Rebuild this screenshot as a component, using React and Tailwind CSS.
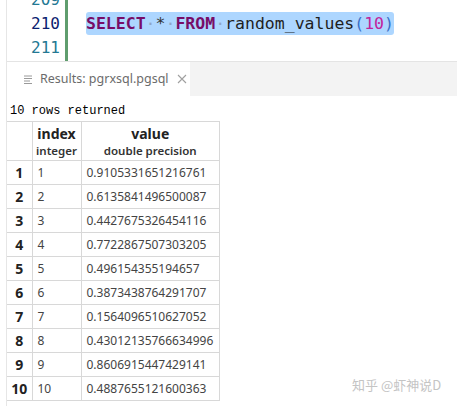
import React from 'react';

const rows = [
  '0.9105331651216761',
  '0.6135841496500087',
  '0.4427675326454116',
  '0.7722867507303205',
  '0.496154355194657',
  '0.3873438764291707',
  '0.1564096510627052',
  '0.43012135766634996',
  '0.8606915447429141',
  '0.4887655121600363',
];

const mono = { fontFamily: '"DejaVu Sans Mono", monospace' };

function Dot() {
  return <span className="text-[#8fa6c8]">·</span>;
}

export default function App() {
  return (
    <div
      className="relative w-[457px] h-[406px] overflow-hidden bg-white pl-[6px]"
      style={{ fontFamily: '"Noto Sans", "Open Sans", sans-serif' }}
    >
      <div className="h-full border-l border-[#e6e6e6] flex flex-col">
        {/* editor */}
        <div className="h-[62px] overflow-hidden border-b border-[#e4e4e4] flex shrink-0">
          <div className="w-[53px] pt-[1px] -mt-[13px] text-right text-[16px] leading-[24px] text-[#237893]" style={mono}>
            <div>209</div>
            <div className="text-[#0b216f]">210</div>
            <div>211</div>
          </div>
          <div className="ml-[5px] w-[3px] bg-[#5f9d6e]" />
          <div className="ml-[18px] -mt-[12px] text-[16.5px] leading-[24px]" style={mono}>
            <div>&nbsp;</div>
            <div className="inline-block bg-[#add6ff] rounded-[3px] h-[23px] leading-[23px] whitespace-pre">
              <span className="font-bold text-[#770d68]">SELECT</span>
              <Dot />
              <span className="text-[#333]">*</span>
              <Dot />
              <span className="font-bold text-[#770d68]">FROM</span>
              <Dot />
              <span className="text-[#1e1e1e]">random_values</span>
              <span className="text-[#3a6fc6]">(</span>
              <span className="text-[#c2239a]">10</span>
              <span className="text-[#3a6fc6]">)</span>
            </div>
          </div>
        </div>

        {/* tab bar */}
        <div className="h-[34px] bg-[#f3f3f3] flex shrink-0">
          <div className="w-[183px] bg-white flex items-center pl-[17px] text-[12.5px] text-[#6b6b6b] whitespace-nowrap">
            <svg width="9" height="9" viewBox="0 0 9 9" className="mr-[7px] shrink-0">
              <path d="M0 1h8M0 3.5h8M0 6h6M0 8.5h8" stroke="#9a9a9a" strokeWidth="1" />
            </svg>
            <span>Results: pgrxsql.pgsql</span>
            <svg width="10" height="10" viewBox="0 0 10 10" className="ml-[8px] shrink-0">
              <path d="M1 1l8 8M9 1l-8 8" stroke="#a0a0a0" strokeWidth="1.1" />
            </svg>
          </div>
        </div>

        {/* status */}
        <div
          className="h-[25px] pl-[3px] pt-[4px] flex items-center text-[12px] text-black"
          style={{ fontFamily: '"Liberation Mono", monospace' }}
        >
          10 rows returned
        </div>

        {/* table */}
        <table className="table-fixed border-collapse text-[12px] text-[#444] w-[213px]">
          <thead>
            <tr className="h-[39px]">
              <th className="w-[25px] border border-[#d8d8d8] border-l-0" />
              <th className="w-[49px] border border-[#d8d8d8] font-normal leading-[17px] pt-[2px]">
                <div className="font-bold text-[14px] text-[#222]">index</div>
                <div className="text-[11.5px] font-semibold text-[#333]">integer</div>
              </th>
              <th className="border border-[#d8d8d8] font-normal leading-[17px] pt-[2px]">
                <div className="font-bold text-[14px] text-[#222]">value</div>
                <div className="text-[11.5px] font-semibold text-[#333]">double precision</div>
              </th>
            </tr>
          </thead>
          <tbody>
            {rows.map((v, i) => (
              <tr key={i} className="h-[24px]">
                <td className="border border-[#d8d8d8] border-l-0 text-center font-bold text-[14px] text-[#222]">{i + 1}</td>
                <td className="border border-[#d8d8d8] pl-[5px]">{i + 1}</td>
                <td className="border border-[#d8d8d8] pl-[5px] whitespace-nowrap">{v}</td>
              </tr>
            ))}
          </tbody>
        </table>
      </div>

      <div
        className="absolute left-[352px] top-[375px] text-[13px] text-[#c4c4c4]"
        style={{ fontFamily: '"Noto Sans CJK SC", sans-serif' }}
      >
        知乎 @虾神说D
      </div>
    </div>
  );
}
